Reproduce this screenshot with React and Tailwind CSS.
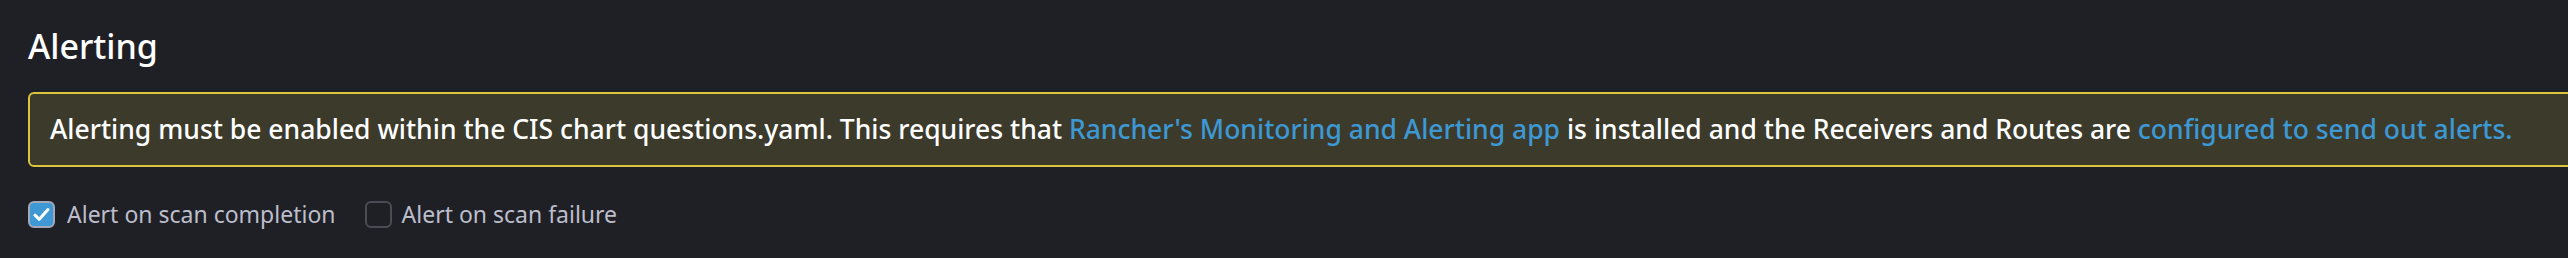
import React from "react";

function Check({ checked }) {
  return checked ? (
    <span className="flex h-[27px] w-[27px] items-center justify-center rounded-[6px] border-2 border-[#a3a8b8] bg-[#3d98d3]">
      <svg width="17" height="15" viewBox="0 0 17 15" fill="none">
        <path d="M2 8.2 L6.3 12.3 L15 2.5" stroke="white" strokeWidth="3" strokeLinecap="round" strokeLinejoin="round" />
      </svg>
    </span>
  ) : (
    <span className="h-[27px] w-[27px] rounded-[6px] border-2 border-[#4a4c55] bg-[#1f2026]" />
  );
}

export default function App() {
  return (
    <div className="h-[258px] w-[2568px] overflow-hidden bg-[#1f2026] pl-[28px] pt-[22px]" style={{ fontFamily: "'Noto Sans', sans-serif" }}>
      <h3 className="text-[34px] font-medium leading-[48px] text-white">Alerting</h3>
      <div className="mt-[22px] flex h-[75px] w-[2580px] items-center rounded-[6px] border-2 border-[#dcc53d] bg-[#3c3a2b] pl-[20px] text-[26.5px] font-medium text-white">
        <span className="whitespace-nowrap">
          Alerting must be enabled within the CIS chart questions.yaml. This requires that{" "}
          <a className="text-[#3d98d3]">Rancher's Monitoring and Alerting app</a> is installed and the Receivers and Routes are{" "}
          <a className="text-[#3d98d3]">configured to send out alerts.</a>
        </span>
      </div>
      <div className="mt-[30px] flex items-center text-[23px] text-[#bcbecb]">
        <label className="flex items-center gap-[12px]">
          <Check checked />
          <span>Alert on scan completion</span>
        </label>
        <label className="ml-[29px] flex items-center gap-[10px]">
          <Check />
          <span>Alert on scan failure</span>
        </label>
      </div>
    </div>
  );
}
